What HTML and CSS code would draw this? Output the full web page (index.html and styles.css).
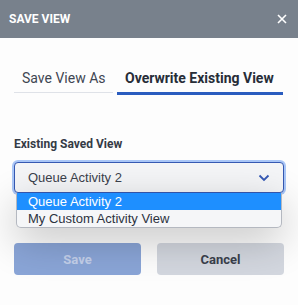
FILE: index.html
```html
<!DOCTYPE html>
<html lang="en">
<head>
<meta charset="UTF-8" />
<meta name="viewport" content="width=device-width, initial-scale=1" />
<title>Save View</title>
<link rel="stylesheet" href="styles.css">
</head>
<body>

<div class="dialog">
  <div class="dialog-header">
    <span class="dialog-title">SAVE VIEW</span>
    <svg class="close-icon" width="10" height="10" viewBox="0 0 10 10">
      <path d="M1 1 L9 9 M9 1 L1 9" stroke="#fff" stroke-width="1.6" fill="none" />
    </svg>
  </div>

  <div class="dialog-body">
    <div class="tabs">
      <div class="tab">Save View As</div>
      <div class="tab active">Overwrite Existing View</div>
    </div>

    <label class="field-label">Existing Saved View</label>
    <div class="select-wrap">
      <div class="select">
        <span>Queue Activity 2</span>
        <svg class="chevron" width="12" height="8" viewBox="0 0 12 8">
          <path d="M1.5 1.5 L6 6 L10.5 1.5" stroke="#3558b4" stroke-width="1.8" fill="none" />
        </svg>
      </div>
      <ul class="options">
        <li class="selected">Queue Activity 2</li>
        <li>My Custom Activity View</li>
      </ul>
    </div>

    <div class="actions">
      <button class="btn btn-save" disabled>Save</button>
      <button class="btn btn-cancel">Cancel</button>
    </div>
  </div>
</div>

</body>
</html>
```

FILE: styles.css
```css
body {
  margin: 0;
  font-family: Roboto, "Liberation Sans", sans-serif;
  background: #fdfdfd;
  width: 298px;
  height: 305px;
  overflow: hidden;
}
.dialog-header {
  height: 38px;
  background-color: #78818c;
  display: flex;
  align-items: center;
  justify-content: space-between;
  padding: 0 11px 0 9px;
}
.dialog-title {
  color: #fff;
  font-size: 12px;
  font-weight: bold;
}
.close-icon {
  display: block;
}
.dialog-body {
  padding: 30px 14px 0 14px;
}
.tabs {
  display: flex;
  gap: 4px;
  margin-right: 1px;
}
.tab {
  box-sizing: border-box;
  width: 99px;
  padding: 2px 8px 6px 8px;
  font-size: 14px;
  white-space: nowrap;
  color: #3f4652;
  border-bottom: 1px solid #dfe2e8;
  margin-bottom: 2px;
}
.tab.active {
  flex: 1;
  font-weight: bold;
  color: #272d38;
  border-bottom: 3px solid #2a5cbf;
  margin-bottom: 0;
}
.field-label {
  display: block;
  margin-top: 42px;
  font-size: 12px;
  font-weight: bold;
  color: #353b46;
}
.select-wrap {
  position: relative;
  margin-top: 11px;
}
.select {
  height: 29px;
  border: 1px solid #3659b2;
  border-radius: 4px;
  background: #f4f5f7;
  box-shadow: 0 0 0 2px #a9c6f7;
  display: flex;
  align-items: center;
  justify-content: space-between;
  padding: 0 13px 0 13px;
  font-family: "Liberation Sans", Arial, sans-serif;
  font-size: 13px;
  color: #3b414c;
}
.chevron {
  display: block;
}
.options {
  position: absolute;
  top: 31px;
  left: 2px;
  right: 2px;
  margin: 0;
  padding: 0;
  list-style: none;
  background: #f5f6f8;
  border: 1px solid #b4b8c0;
  border-top: none;
  border-radius: 0 0 5px 5px;
  box-shadow: 0 12px 40px rgba(0, 0, 0, 0.24);
  font-family: "Liberation Sans", Arial, sans-serif;
  font-size: 13px;
  color: #2c3240;
  overflow: hidden;
}
.options li {
  height: 17px;
  line-height: 17px;
  padding-left: 11px;
}
.options li.selected {
  background: #1e8fff;
  color: #fff;
}
.actions {
  display: flex;
  gap: 16px;
  margin-top: 50px;
}
.btn {
  flex: 1;
  height: 32px;
  border: none;
  border-radius: 4px;
  font-family: Roboto, "Liberation Sans", sans-serif;
  font-size: 13px;
  font-weight: bold;
}
.btn-save {
  background: #8aa5d7;
  color: #c4d0ea;
}
.btn-cancel {
  background: #d3d7df;
  color: #3a404c;
}
```
